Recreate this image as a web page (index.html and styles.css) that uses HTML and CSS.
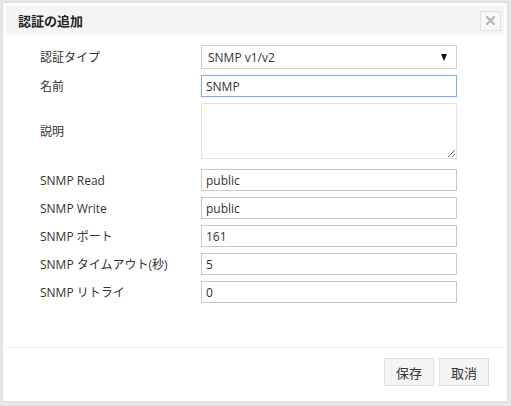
FILE: index.html
```html
<!DOCTYPE html>
<html lang="ja">
<head>
<meta charset="utf-8">
<title>認証の追加</title>
<link rel="stylesheet" href="styles.css">
</head>
<body>
<div class="dialog">
  <div class="titlebar">
    <span class="title">認証の追加</span>
    <button class="close" type="button" aria-label="閉じる">
      <svg width="9" height="9" viewBox="0 0 9 9"><path d="M1 1 L8 8 M8 1 L1 8" stroke="#b5b5b5" stroke-width="2.2" stroke-linecap="square"/></svg>
    </button>
  </div>
  <form class="form">
    <label class="label">認証タイプ</label>
    <div class="select-wrap">
      <select class="field select"><option>SNMP v1/v2</option></select>
    </div>
    <label class="label">名前</label>
    <input class="field focus" type="text" value="SNMP">
    <label class="label label-desc">説明</label>
    <textarea class="field area"></textarea>
    <label class="label">SNMP Read</label>
    <input class="field" type="text" value="public">
    <label class="label">SNMP Write</label>
    <input class="field" type="text" value="public">
    <label class="label">SNMP ポート</label>
    <input class="field" type="text" value="161">
    <label class="label">SNMP タイムアウト(秒)</label>
    <input class="field" type="text" value="5">
    <label class="label">SNMP リトライ</label>
    <input class="field" type="text" value="0">
  </form>
  <div class="footer">
    <button class="btn" type="button">保存</button>
    <button class="btn" type="button">取消</button>
  </div>
</div>
</body>
</html>
```
FILE: styles.css
```css
* { box-sizing: border-box; }
html, body { height: 100%; }
body {
  margin: 0;
  padding: 2px 3px 4px 2px;
  background: #e7e7e7;
  font-family: "Open Sans", "Noto Sans CJK JP", sans-serif;
  font-size: 12px;
  color: #333;
}
.dialog {
  height: 100%;
  background: #fff;
  border: 1px solid #dedede;
  padding: 3px;
  display: flex;
  flex-direction: column;
}
.titlebar {
  height: 29px;
  background: #f5f5f5;
  display: flex;
  align-items: center;
  justify-content: space-between;
  padding: 0 3px 0 12px;
}
.title {
  font-family: "Noto Sans CJK JP", sans-serif;
  font-size: 13px;
  font-weight: bold;
  color: #222;
}
.close {
  width: 21px;
  height: 20px;
  border: 1px solid #e2e2e2;
  background: #f7f7f7;
  padding: 0;
  display: flex;
  align-items: center;
  justify-content: center;
}
.form {
  flex: 1;
  display: grid;
  grid-template-columns: 161px 256px;
  grid-template-rows: 24px 22px 60px repeat(5, 22px);
  row-gap: 6px;
  align-content: start;
  padding: 10px 0 0 34px;
  border-bottom: 1px solid #eeeeee;
}
.label {
  display: flex;
  align-items: center;
  color: #333;
  white-space: nowrap;
}
.label-desc {
  align-self: start;
  height: 56px;
}
.field {
  font-family: "Open Sans", "Noto Sans CJK JP", sans-serif;
  font-size: 12px;
  color: #333;
  border: 1px solid #c9c9c9;
  background: #fff;
  padding: 0 4px;
  margin: 0;
  width: 256px;
  height: 22px;
  outline: none;
}
.select-wrap { position: relative; }
.select-wrap::after {
  content: "";
  position: absolute;
  right: 10px;
  top: 9px;
  border-left: 3.5px solid transparent;
  border-right: 3.5px solid transparent;
  border-top: 7px solid #111;
}
.select {
  height: 24px;
  appearance: none;
  -webkit-appearance: none;
  padding-left: 6px;
  border-color: #cfcfcf;
}
.focus {
  border-color: #86aee8;
  box-shadow: 0 0 1px #a9c6f0;
}
.area {
  height: 56px;
  align-self: start;
  resize: vertical;
  border-color: #e3e3e3;
}
.footer {
  display: flex;
  justify-content: flex-end;
  gap: 5px;
  padding: 10px 15px 0 0;
  height: 50px;
}
.btn {
  width: 50px;
  height: 28px;
  border: 1px solid #dedede;
  background: #f5f5f5;
  font-family: "Noto Sans CJK JP", sans-serif;
  font-size: 13px;
  color: #333;
  padding: 0;
}
```
